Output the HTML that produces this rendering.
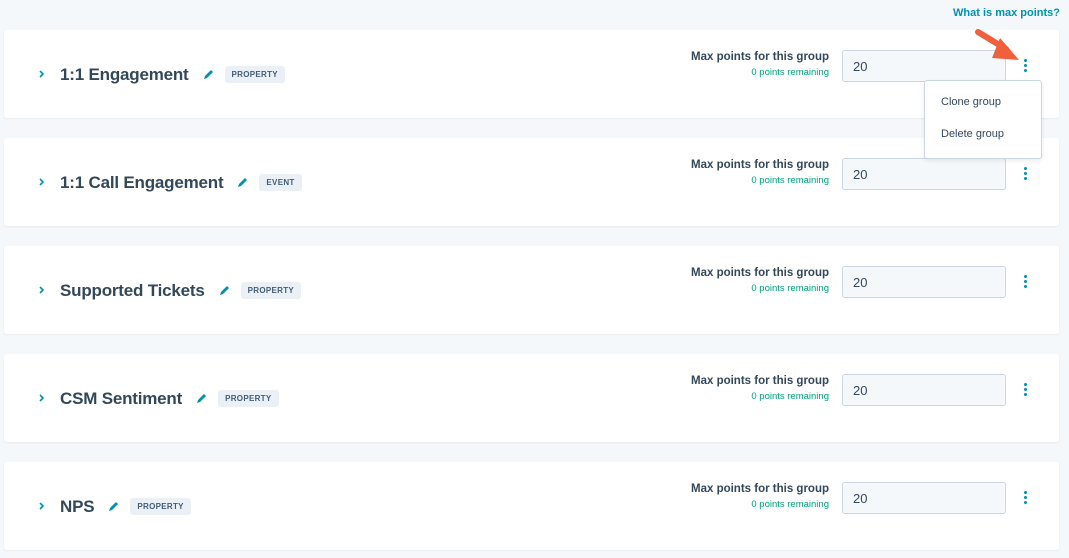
<!DOCTYPE html>
<html><head><style>
body{margin:0;width:1069px;height:558px;background:#f5f8fa;font-family:"Liberation Sans",sans-serif;position:relative;overflow:hidden;color:#33475b}
.help{position:absolute;right:9px;top:7px;font-size:11px;font-weight:bold;color:#0091ae}
.card{position:absolute;left:4px;width:1055px;height:88px;background:#fff;border-radius:3px;box-shadow:0 1px 2px rgba(0,0,0,.06)}
.chev{position:absolute;left:31px;top:37px;width:14px;height:14px}
.title{position:absolute;left:56px;top:35px;font-size:17px;font-weight:bold;color:#33475b;white-space:nowrap;letter-spacing:-0.2px}
.tag{display:inline-block;margin-left:10px;background:#eaf0f6;border-radius:3px;font-size:8px;font-weight:bold;color:#425b76;padding:4px 7px;vertical-align:3px;letter-spacing:.3px}
.pen{display:inline-block;margin-left:14px;vertical-align:0}
.lbl{position:absolute;right:230px;top:21px;text-align:right;font-size:11.5px;font-weight:bold;color:#33475b}
.lbl small{display:block;font-weight:normal;font-size:9.5px;color:#00a07a;margin-top:4px}
.inp{position:absolute;left:838px;top:20px;width:164px;height:32px;box-sizing:border-box;border:1px solid #cbd6e2;background:#f5f8fa;border-radius:3px;font-size:13px;padding:8px 10px}
.dots{position:absolute;left:1020px;top:29px;width:4px}
.dots i{display:block;width:3px;height:3px;border-radius:50%;background:#0091ae;margin-bottom:2px}
.menu{position:absolute;left:924px;top:80px;width:116px;height:77px;background:#fff;border:1px solid #cbd6e2;border-radius:3px;box-shadow:0 2px 4px rgba(0,0,0,.08);font-size:11px;color:#33475b}
.menu div{position:absolute;left:16px}
</style></head><body>
<div class="help">What is max points?</div>

<div class="card" style="top:30px"><svg class="chev" viewBox="0 0 14 14"><path d="M5 4l3 3-3 3" stroke="#0091ae" stroke-width="1.6" fill="none"/></svg><div class="title">1:1 Engagement<svg class="pen" width="12" height="12" viewBox="0 0 12 12"><path d="M1 11l1-3 6-6 2 2-6 6z" fill="#0091ae"/></svg><span class="tag">PROPERTY</span></div><div class="lbl">Max points for this group<small>0 points remaining</small></div><div class="inp">20</div><div class="dots"><i></i><i></i><i></i></div></div>

<div class="card" style="top:138px"><svg class="chev" viewBox="0 0 14 14"><path d="M5 4l3 3-3 3" stroke="#0091ae" stroke-width="1.6" fill="none"/></svg><div class="title">1:1 Call Engagement<svg class="pen" width="12" height="12" viewBox="0 0 12 12"><path d="M1 11l1-3 6-6 2 2-6 6z" fill="#0091ae"/></svg><span class="tag">EVENT</span></div><div class="lbl">Max points for this group<small>0 points remaining</small></div><div class="inp">20</div><div class="dots"><i></i><i></i><i></i></div></div>

<div class="card" style="top:246px"><svg class="chev" viewBox="0 0 14 14"><path d="M5 4l3 3-3 3" stroke="#0091ae" stroke-width="1.6" fill="none"/></svg><div class="title">Supported Tickets<svg class="pen" width="12" height="12" viewBox="0 0 12 12"><path d="M1 11l1-3 6-6 2 2-6 6z" fill="#0091ae"/></svg><span class="tag">PROPERTY</span></div><div class="lbl">Max points for this group<small>0 points remaining</small></div><div class="inp">20</div><div class="dots"><i></i><i></i><i></i></div></div>

<div class="card" style="top:354px"><svg class="chev" viewBox="0 0 14 14"><path d="M5 4l3 3-3 3" stroke="#0091ae" stroke-width="1.6" fill="none"/></svg><div class="title">CSM Sentiment<svg class="pen" width="12" height="12" viewBox="0 0 12 12"><path d="M1 11l1-3 6-6 2 2-6 6z" fill="#0091ae"/></svg><span class="tag">PROPERTY</span></div><div class="lbl">Max points for this group<small>0 points remaining</small></div><div class="inp">20</div><div class="dots"><i></i><i></i><i></i></div></div>

<div class="card" style="top:462px"><svg class="chev" viewBox="0 0 14 14"><path d="M5 4l3 3-3 3" stroke="#0091ae" stroke-width="1.6" fill="none"/></svg><div class="title">NPS<svg class="pen" width="12" height="12" viewBox="0 0 12 12"><path d="M1 11l1-3 6-6 2 2-6 6z" fill="#0091ae"/></svg><span class="tag">PROPERTY</span></div><div class="lbl">Max points for this group<small>0 points remaining</small></div><div class="inp">20</div><div class="dots"><i></i><i></i><i></i></div></div>

<div class="menu"><div style="top:15px">Clone group</div><div style="top:47px">Delete group</div></div>
<svg style="position:absolute;left:970px;top:25px" width="55" height="40" viewBox="0 0 55 40"><path d="M8 7L36 24" stroke="#f0603d" stroke-width="6" stroke-linecap="round"/><path d="M30 13L49 35 22 33z" fill="#f0603d"/></svg>
</body></html>
